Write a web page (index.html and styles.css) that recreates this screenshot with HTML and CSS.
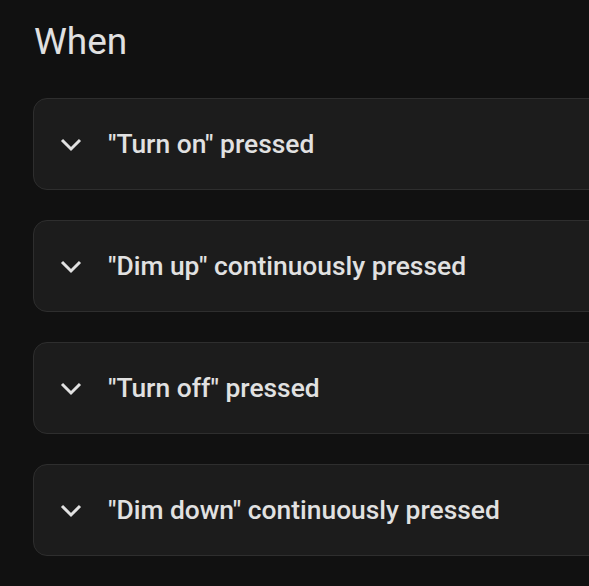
FILE: index.html
```html
<!DOCTYPE html>
<html>
<head>
<meta charset="utf-8">
<link rel="stylesheet" href="styles.css">
</head>
<body>
<div class="page">
  <h2 class="title">When</h2>
  <div class="list">
    <div class="card">
      <svg class="chev" viewBox="0 0 22 14"><path d="M2 2 L11 11 L20 2" fill="none" stroke="#e1e1e1" stroke-width="3"/></svg>
      <span class="label">"Turn on" pressed</span>
    </div>
    <div class="card">
      <svg class="chev" viewBox="0 0 22 14"><path d="M2 2 L11 11 L20 2" fill="none" stroke="#e1e1e1" stroke-width="3"/></svg>
      <span class="label">"Dim up" continuously pressed</span>
    </div>
    <div class="card">
      <svg class="chev" viewBox="0 0 22 14"><path d="M2 2 L11 11 L20 2" fill="none" stroke="#e1e1e1" stroke-width="3"/></svg>
      <span class="label">"Turn off" pressed</span>
    </div>
    <div class="card">
      <svg class="chev" viewBox="0 0 22 14"><path d="M2 2 L11 11 L20 2" fill="none" stroke="#e1e1e1" stroke-width="3"/></svg>
      <span class="label">"Dim down" continuously pressed</span>
    </div>
  </div>
</div>
</body>
</html>
```
FILE: styles.css
```css
html, body {
  margin: 0;
  padding: 0;
  background: #111111;
  overflow: hidden;
}
body {
  font-family: Roboto, "Noto Sans", sans-serif;
  color: #e1e1e1;
}
.page {
  padding: 20px 0 0 33px;
  overflow: hidden;
}
.title {
  margin: 0 0 0 1px;
  font-size: 37px;
  font-weight: 400;
  line-height: 44px;
  height: 78px;
}
.list {
  display: flex;
  flex-direction: column;
  gap: 30px;
  margin-right: -40px;
}
.card {
  height: 90px;
  border: 1px solid #2e2e2e;
  border-radius: 14px;
  background: #1c1c1c;
  display: flex;
  align-items: center;
  padding-left: 26px;
}
.chev {
  width: 22px;
  height: 14px;
  margin-top: 1px;
  flex: none;
}
.label {
  margin-left: 26px;
  font-size: 26.4px;
  font-weight: 500;
}
```
